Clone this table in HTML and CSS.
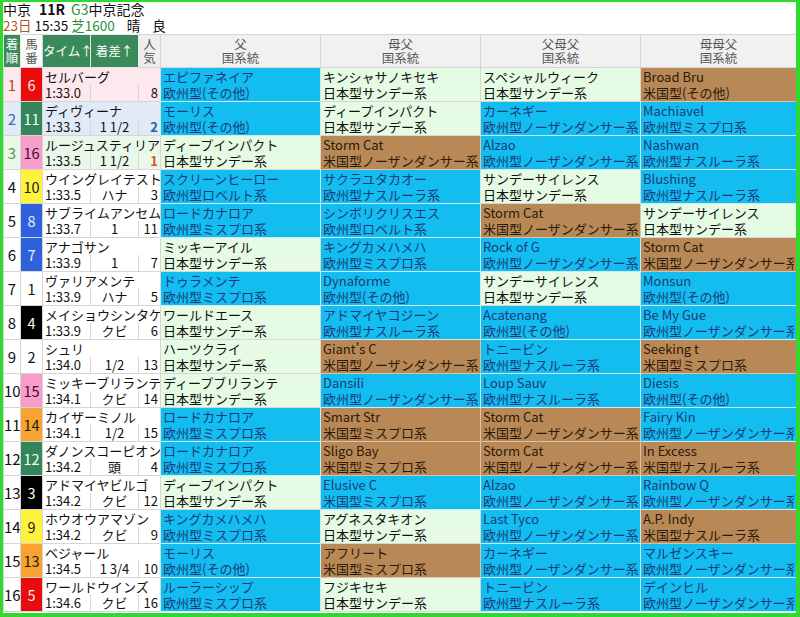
FILE: index.html
```html
<!DOCTYPE html>
<html lang="ja">
<head>
<meta charset="utf-8">
<link rel="stylesheet" href="styles.css">
</head>
<body>
<div class="frame">
  <div class="title">
    <div class="t1"><span class="place">中京</span><span class="race">11R</span><span class="grade">G3</span>中京記念</div>
    <div class="t2"><span class="day">23日</span><span class="clock">15:35</span><span class="course">芝1600</span><span class="wx">晴</span><span class="cond">良</span></div>
  </div>
  <table class="tbl">
    <colgroup>
      <col class="c-pos"><col class="c-num"><col class="c-time"><col class="c-diff"><col class="c-pop">
      <col class="c-ped"><col class="c-ped"><col class="c-ped"><col class="c-ped4">
    </colgroup>
    <thead>
      <tr>
        <th class="hg hsm">着<br>順</th>
        <th class="hw">馬<br>番</th>
        <th class="hg">タイム↑</th>
        <th class="hg">着差↑</th>
        <th class="hl">人<br>気</th>
        <th class="hp">父<br>国系統</th>
        <th class="hp">母父<br>国系統</th>
        <th class="hp">父母父<br>国系統</th>
        <th class="hp">母母父<br>国系統</th>
      </tr>
    </thead>
    <tbody>
      <tr class="top r1"><td rowspan="2" class="pos p1">1</td><td rowspan="2" class="num w3">6</td><td colspan="3" class="name">セルバーグ</td>
        <td rowspan="2" class="ped eu"><div>エピファネイア</div><div>欧州型(その他)</div></td>
        <td rowspan="2" class="ped jp"><div>キンシャサノキセキ</div><div>日本型サンデー系</div></td>
        <td rowspan="2" class="ped jp"><div>スペシャルウィーク</div><div>日本型サンデー系</div></td>
        <td rowspan="2" class="ped us"><div>Broad Bru</div><div>米国型(その他)</div></td></tr>
      <tr class="bot r1"><td class="time">1:33.0</td><td class="diff"></td><td class="pop">8</td></tr>

      <tr class="top r2"><td rowspan="2" class="pos p2">2</td><td rowspan="2" class="num w6">11</td><td colspan="3" class="name">ディヴィーナ</td>
        <td rowspan="2" class="ped eu"><div>モーリス</div><div>欧州型(その他)</div></td>
        <td rowspan="2" class="ped jp"><div>ディープインパクト</div><div>日本型サンデー系</div></td>
        <td rowspan="2" class="ped eu"><div>カーネギー</div><div>欧州型ノーザンダンサー系</div></td>
        <td rowspan="2" class="ped eu"><div>Machiavel</div><div>欧州型ミスプロ系</div></td></tr>
      <tr class="bot r2"><td class="time">1:33.3</td><td class="diff">1 1/2</td><td class="pop pop2">2</td></tr>

      <tr class="top r3"><td rowspan="2" class="pos p3">3</td><td rowspan="2" class="num w8">16</td><td colspan="3" class="name">ルージュスティリア</td>
        <td rowspan="2" class="ped jp"><div>ディープインパクト</div><div>日本型サンデー系</div></td>
        <td rowspan="2" class="ped us"><div>Storm Cat</div><div>米国型ノーザンダンサー系</div></td>
        <td rowspan="2" class="ped eu"><div>Alzao</div><div>欧州型ノーザンダンサー系</div></td>
        <td rowspan="2" class="ped eu"><div>Nashwan</div><div>欧州型ナスルーラ系</div></td></tr>
      <tr class="bot r3"><td class="time">1:33.5</td><td class="diff">1 1/2</td><td class="pop pop1">1</td></tr>

      <tr class="top"><td rowspan="2" class="pos">4</td><td rowspan="2" class="num w5">10</td><td colspan="3" class="name">ウイングレイテスト</td>
        <td rowspan="2" class="ped eu"><div>スクリーンヒーロー</div><div>欧州型ロベルト系</div></td>
        <td rowspan="2" class="ped eu"><div>サクラユタカオー</div><div>欧州型ナスルーラ系</div></td>
        <td rowspan="2" class="ped jp"><div>サンデーサイレンス</div><div>日本型サンデー系</div></td>
        <td rowspan="2" class="ped eu"><div>Blushing</div><div>欧州型ナスルーラ系</div></td></tr>
      <tr class="bot"><td class="time">1:33.5</td><td class="diff">ハナ</td><td class="pop">3</td></tr>

      <tr class="top"><td rowspan="2" class="pos">5</td><td rowspan="2" class="num w4">8</td><td colspan="3" class="name">サブライムアンセム</td>
        <td rowspan="2" class="ped eu"><div>ロードカナロア</div><div>欧州型ミスプロ系</div></td>
        <td rowspan="2" class="ped eu"><div>シンボリクリスエス</div><div>欧州型ロベルト系</div></td>
        <td rowspan="2" class="ped us"><div>Storm Cat</div><div>米国型ノーザンダンサー系</div></td>
        <td rowspan="2" class="ped jp"><div>サンデーサイレンス</div><div>日本型サンデー系</div></td></tr>
      <tr class="bot"><td class="time">1:33.7</td><td class="diff">1</td><td class="pop">11</td></tr>

      <tr class="top"><td rowspan="2" class="pos">6</td><td rowspan="2" class="num w4">7</td><td colspan="3" class="name">アナゴサン</td>
        <td rowspan="2" class="ped jp"><div>ミッキーアイル</div><div>日本型サンデー系</div></td>
        <td rowspan="2" class="ped eu"><div>キングカメハメハ</div><div>欧州型ミスプロ系</div></td>
        <td rowspan="2" class="ped eu"><div>Rock of G</div><div>欧州型ノーザンダンサー系</div></td>
        <td rowspan="2" class="ped us"><div>Storm Cat</div><div>米国型ノーザンダンサー系</div></td></tr>
      <tr class="bot"><td class="time">1:33.9</td><td class="diff">1</td><td class="pop">7</td></tr>

      <tr class="top"><td rowspan="2" class="pos">7</td><td rowspan="2" class="num w1">1</td><td colspan="3" class="name">ヴァリアメンテ</td>
        <td rowspan="2" class="ped eu"><div>ドゥラメンテ</div><div>欧州型ミスプロ系</div></td>
        <td rowspan="2" class="ped eu"><div>Dynaforme</div><div>欧州型(その他)</div></td>
        <td rowspan="2" class="ped jp"><div>サンデーサイレンス</div><div>日本型サンデー系</div></td>
        <td rowspan="2" class="ped eu"><div>Monsun</div><div>欧州型(その他)</div></td></tr>
      <tr class="bot"><td class="time">1:33.9</td><td class="diff">ハナ</td><td class="pop">5</td></tr>

      <tr class="top"><td rowspan="2" class="pos">8</td><td rowspan="2" class="num w2">4</td><td colspan="3" class="name">メイショウシンタケ</td>
        <td rowspan="2" class="ped jp"><div>ワールドエース</div><div>日本型サンデー系</div></td>
        <td rowspan="2" class="ped eu"><div>アドマイヤコジーン</div><div>欧州型ナスルーラ系</div></td>
        <td rowspan="2" class="ped eu"><div>Acatenang</div><div>欧州型(その他)</div></td>
        <td rowspan="2" class="ped eu"><div>Be My Gue</div><div>欧州型ノーザンダンサー系</div></td></tr>
      <tr class="bot"><td class="time">1:33.9</td><td class="diff">クビ</td><td class="pop">6</td></tr>

      <tr class="top"><td rowspan="2" class="pos">9</td><td rowspan="2" class="num w1">2</td><td colspan="3" class="name">シュリ</td>
        <td rowspan="2" class="ped jp"><div>ハーツクライ</div><div>日本型サンデー系</div></td>
        <td rowspan="2" class="ped us"><div>Giant's C</div><div>米国型ノーザンダンサー系</div></td>
        <td rowspan="2" class="ped eu"><div>トニービン</div><div>欧州型ナスルーラ系</div></td>
        <td rowspan="2" class="ped us"><div>Seeking t</div><div>米国型ミスプロ系</div></td></tr>
      <tr class="bot"><td class="time">1:34.0</td><td class="diff">1/2</td><td class="pop">13</td></tr>

      <tr class="top"><td rowspan="2" class="pos">10</td><td rowspan="2" class="num w8">15</td><td colspan="3" class="name">ミッキーブリランテ</td>
        <td rowspan="2" class="ped jp"><div>ディープブリランテ</div><div>日本型サンデー系</div></td>
        <td rowspan="2" class="ped eu"><div>Dansili</div><div>欧州型ノーザンダンサー系</div></td>
        <td rowspan="2" class="ped eu"><div>Loup Sauv</div><div>欧州型ナスルーラ系</div></td>
        <td rowspan="2" class="ped eu"><div>Diesis</div><div>欧州型(その他)</div></td></tr>
      <tr class="bot"><td class="time">1:34.1</td><td class="diff">クビ</td><td class="pop">14</td></tr>

      <tr class="top"><td rowspan="2" class="pos">11</td><td rowspan="2" class="num w7">14</td><td colspan="3" class="name">カイザーミノル</td>
        <td rowspan="2" class="ped eu"><div>ロードカナロア</div><div>欧州型ミスプロ系</div></td>
        <td rowspan="2" class="ped us"><div>Smart Str</div><div>米国型ミスプロ系</div></td>
        <td rowspan="2" class="ped us"><div>Storm Cat</div><div>米国型ノーザンダンサー系</div></td>
        <td rowspan="2" class="ped eu"><div>Fairy Kin</div><div>欧州型ノーザンダンサー系</div></td></tr>
      <tr class="bot"><td class="time">1:34.1</td><td class="diff">1/2</td><td class="pop">15</td></tr>

      <tr class="top"><td rowspan="2" class="pos">12</td><td rowspan="2" class="num w6">12</td><td colspan="3" class="name">ダノンスコーピオン</td>
        <td rowspan="2" class="ped eu"><div>ロードカナロア</div><div>欧州型ミスプロ系</div></td>
        <td rowspan="2" class="ped us"><div>Sligo Bay</div><div>米国型ミスプロ系</div></td>
        <td rowspan="2" class="ped us"><div>Storm Cat</div><div>米国型ノーザンダンサー系</div></td>
        <td rowspan="2" class="ped us"><div>In Excess</div><div>米国型ナスルーラ系</div></td></tr>
      <tr class="bot"><td class="time">1:34.2</td><td class="diff">頭</td><td class="pop">4</td></tr>

      <tr class="top"><td rowspan="2" class="pos">13</td><td rowspan="2" class="num w2">3</td><td colspan="3" class="name">アドマイヤビルゴ</td>
        <td rowspan="2" class="ped jp"><div>ディープインパクト</div><div>日本型サンデー系</div></td>
        <td rowspan="2" class="ped eu"><div>Elusive C</div><div>米国型ミスプロ系</div></td>
        <td rowspan="2" class="ped eu"><div>Alzao</div><div>欧州型ノーザンダンサー系</div></td>
        <td rowspan="2" class="ped eu"><div>Rainbow Q</div><div>欧州型ノーザンダンサー系</div></td></tr>
      <tr class="bot"><td class="time">1:34.2</td><td class="diff">クビ</td><td class="pop">12</td></tr>

      <tr class="top"><td rowspan="2" class="pos">14</td><td rowspan="2" class="num w5">9</td><td colspan="3" class="name">ホウオウアマゾン</td>
        <td rowspan="2" class="ped eu"><div>キングカメハメハ</div><div>欧州型ミスプロ系</div></td>
        <td rowspan="2" class="ped jp"><div>アグネスタキオン</div><div>日本型サンデー系</div></td>
        <td rowspan="2" class="ped eu"><div>Last Tyco</div><div>欧州型ノーザンダンサー系</div></td>
        <td rowspan="2" class="ped us"><div>A.P. Indy</div><div>米国型ナスルーラ系</div></td></tr>
      <tr class="bot"><td class="time">1:34.2</td><td class="diff">クビ</td><td class="pop">9</td></tr>

      <tr class="top"><td rowspan="2" class="pos">15</td><td rowspan="2" class="num w7">13</td><td colspan="3" class="name">ベジャール</td>
        <td rowspan="2" class="ped eu"><div>モーリス</div><div>欧州型(その他)</div></td>
        <td rowspan="2" class="ped us"><div>アフリート</div><div>米国型ミスプロ系</div></td>
        <td rowspan="2" class="ped eu"><div>カーネギー</div><div>欧州型ノーザンダンサー系</div></td>
        <td rowspan="2" class="ped eu"><div>マルゼンスキー</div><div>欧州型ノーザンダンサー系</div></td></tr>
      <tr class="bot"><td class="time">1:34.5</td><td class="diff">1 3/4</td><td class="pop">10</td></tr>

      <tr class="top"><td rowspan="2" class="pos">16</td><td rowspan="2" class="num w3">5</td><td colspan="3" class="name">ワールドウインズ</td>
        <td rowspan="2" class="ped eu"><div>ルーラーシップ</div><div>欧州型ミスプロ系</div></td>
        <td rowspan="2" class="ped jp"><div>フジキセキ</div><div>日本型サンデー系</div></td>
        <td rowspan="2" class="ped eu"><div>トニービン</div><div>欧州型ナスルーラ系</div></td>
        <td rowspan="2" class="ped eu"><div>デインヒル</div><div>欧州型ノーザンダンサー系</div></td></tr>
      <tr class="bot"><td class="time">1:34.6</td><td class="diff">クビ</td><td class="pop">16</td></tr>
    </tbody>
  </table>
</div>
</body>
</html>
```

FILE: styles.css
```css
* { box-sizing: border-box; }
html, body { margin: 0; padding: 0; background: #fff; }
body {
  width: 800px;
  height: 617px;
  font-family: "Noto Sans CJK JP", "Noto Sans", sans-serif;
  color: #111;
}
.frame {
  width: 800px;
  height: 617px;
  border-style: solid;
  border-color: #2fd92f;
  border-width: 2px 4px 4px 3px;
  overflow: hidden;
  background: #fff;
}
.title {
  height: 32px;
  font-size: 14px;
  line-height: 15px;
}
.t1, .t2 { white-space: nowrap; height: 15px; }
.t2 { margin-top: 1px; font-size: 13.5px; }
.place { margin-right: 8px; }
.race { font-weight: bold; margin-right: 6px; }
.grade { color: #2a8f3a; }
.day { color: #b3542a; margin-right: 3px; }
.clock { margin-right: 3px; }
.course { color: #2a8f3a; margin-right: 12px; }
.wx { margin-right: 12px; }

.tbl {
  border-collapse: collapse;
  table-layout: fixed;
  width: 793px;
}
.c-pos { width: 17px; }
.c-num { width: 22px; }
.c-time { width: 48px; }
.c-diff { width: 48px; }
.c-pop { width: 22px; }
.c-ped { width: 160px; }
.c-ped4 { width: 156px; }

.tbl th {
  height: 33px;
  padding: 0;
  font-weight: normal;
  font-size: 12.5px;
  line-height: 14px;
  text-align: center;
  border: 1px solid #d4d4d4;
  white-space: nowrap;
  overflow: hidden;
}
.hg { background: #3b8a5b; color: #fff; border-color: #e8e8e8 !important; }
.hsm { font-size: 12px; }
.hw { background: #fbfbfb; color: #555; }
.hl { background: #eeeeee; color: #555; }
.hp { background: #f1f1f1; color: #555; }

.tbl td {
  padding: 0 1px;
  border: 1px solid #d6d6d6;
  white-space: nowrap;
  overflow: hidden;
  font-size: 13px;
  vertical-align: middle;
}
.top { height: 17px; }
.bot { height: 17px; }
.top td { line-height: 16px; }
.bot td { line-height: 16px; }
.name { border-bottom-style: hidden !important; padding-left: 2px !important; vertical-align: bottom !important; }
.bot td { border-top-style: hidden; }
.time { padding-left: 2px !important; }
.diff { text-align: center; }
.pop { text-align: right; padding-right: 2px !important; }
.pop1 { color: #d4571e; font-weight: bold; }
.pop2 { color: #2f5ea8; font-weight: bold; }

.r1 td { background: #fde9ed; }
.r2 td { background: #e1ebf7; }
.r3 td { background: #eaf8ea; }

.pos { text-align: center; font-size: 15px !important; padding: 0 !important; }
.p1 { color: #b5472c; }
.p2 { color: #3b69ad; }
.p3 { color: #5b9a4a; }

.num { text-align: center; font-size: 14.5px !important; padding: 0 !important; }
.w1 { background: #fff !important; color: #111; }
.w2 { background: #000 !important; color: #fff; }
.w3 { background: #e80c0c !important; color: #ffe6e6; }
.w4 { background: #2f61dc !important; color: #e8eeff; }
.w5 { background: #fff23c !important; color: #222; }
.w6 { background: #35855a !important; color: #f0fff4; }
.w7 { background: #f7a233 !important; color: #2a1a00; }
.w8 { background: #f79ccb !important; color: #3a1030; }

.ped { padding: 0 2px !important; line-height: 16px; vertical-align: middle; }
.ped div { height: 16px; line-height: 16px; overflow: hidden; }
.eu { background: #14bdf0 !important; color: #1a3b78; border-color: #cfe9f3 !important; }
.jp { background: #e5fbe4 !important; color: #111; }
.us { background: #b98857 !important; color: #2a1a08; border-color: #d8c2a8 !important; }
```
